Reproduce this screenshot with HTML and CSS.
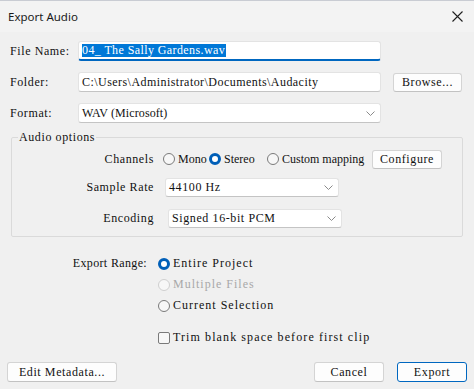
FILE: index.html
```html
<!DOCTYPE html>
<html lang="en">
<head>
    <meta charset="UTF-8">
    <title>Export Audio</title>
    <link rel="stylesheet" href="styles.css">
</head>
<body>
    <div class="dialog">
        <div class="titlebar">
            <span class="title">Export Audio</span>
            <span class="close">
                <svg width="11" height="11" viewBox="0 0 11 11"><path d="M0.5 0.5L10.5 10.5M10.5 0.5L0.5 10.5" stroke="#1f1f1f" stroke-width="1.1"/></svg>
            </span>
        </div>
        <div class="body">
            <div class="file-grid">
                <span class="label">File Name:</span>
                <div class="input focused"><span class="sel">04_ The Sally Gardens.wav</span></div>
                <span></span>

                <span class="label">Folder:</span>
                <div class="input path">C:\Users\Administrator\Documents\Audacity</div>
                <button class="btn browse">Browse...</button>

                <span class="label">Format:</span>
                <div class="input select fmt">WAV (Microsoft)
                    <svg class="chev" width="9" height="5" viewBox="0 0 9 5"><path d="M0.5 0.5L4.5 4.5L8.5 0.5" fill="none" stroke="#8a8a8a"/></svg>
                </div>
                <span></span>
            </div>

            <fieldset class="options">
                <legend>Audio options</legend>
                <div class="opt-row">
                    <span class="opt-label">Channels</span>
                    <div class="ropt mono"><span class="radio"></span>Mono</div>
                    <div class="ropt stereo"><span class="radio on"></span>Stereo</div>
                    <div class="ropt custom"><span class="radio"></span>Custom mapping</div>
                    <button class="btn configure">Configure</button>
                </div>

                <div class="opt-row rate">
                    <span class="opt-label">Sample Rate</span>
                    <div class="input select small">44100 Hz
                        <svg class="chev" width="9" height="5" viewBox="0 0 9 5"><path d="M0.5 0.5L4.5 4.5L8.5 0.5" fill="none" stroke="#8a8a8a"/></svg>
                    </div>
                </div>

                <div class="opt-row encoding">
                    <span class="opt-label">Encoding</span>
                    <div class="input select small enc">Signed 16-bit PCM
                        <svg class="chev" width="9" height="5" viewBox="0 0 9 5"><path d="M0.5 0.5L4.5 4.5L8.5 0.5" fill="none" stroke="#8a8a8a"/></svg>
                    </div>
                </div>
            </fieldset>

            <div class="range">
                <span class="range-label">Export Range:</span>
                <div class="choice"><span class="radio on"></span>Entire Project</div>
                <span></span>
                <div class="choice disabled"><span class="radio"></span>Multiple Files</div>
                <span></span>
                <div class="choice"><span class="radio"></span>Current Selection</div>
                <span></span>
                <div class="choice trim"><span class="check"></span>Trim blank space before first clip</div>
            </div>
        </div>
        <div class="footer">
            <button class="btn meta">Edit Metadata...</button>
            <div class="actions">
                <button class="btn">Cancel</button>
                <button class="btn primary">Export</button>
            </div>
        </div>
    </div>
</body>
</html>
```

FILE: styles.css
```css
/* dialog base */
body {
    margin: 0;
    background-color: #f0f0f0;
    font-family: "Liberation Serif", serif;
    font-size: 12px;
    letter-spacing: 0.6px;
    color: #111;
}

.dialog {
    width: 474px;
    height: 389px;
    background-color: #f0f0f0;
    border-top: 1px solid #c9ccd3;
    box-sizing: border-box;
    display: flex;
    flex-direction: column;
}

.titlebar {
    height: 31px;
    display: flex;
    justify-content: space-between;
    align-items: center;
    padding: 0 11px 0 8px;
    background-color: #f3f3f3;
}

.title {
    font-family: "Noto Sans", sans-serif;
    font-size: 11.5px;
    letter-spacing: 0;
    color: #1a1a1a;
}

.close {
    display: flex;
}

.body {
    flex: 1;
    padding: 9px 10px 0 10px;
}

/* file / folder / format rows */
.file-grid {
    display: grid;
    grid-template-columns: 68px 303px auto;
    grid-auto-rows: 20px;
    row-gap: 11px;
    align-items: center;
}

.label {
    line-height: 20px;
}

.input {
    height: 20px;
    box-sizing: border-box;
    background-color: #fff;
    border: 1px solid #e3e3e3;
    border-bottom-color: #c4c4c4;
    border-radius: 3px;
    padding: 0 3px;
    display: flex;
    align-items: center;
    white-space: nowrap;
}

.input.focused {
    border-bottom: 2px solid #0067c0;
}

.sel {
    background-color: #0078d7;
    color: #fff;
    line-height: 13px;
    padding-right: 1px;
    letter-spacing: 0.4px;
}

.path {
    letter-spacing: 0.45px;
}

.fmt {
    letter-spacing: 0.1px;
}

.select {
    justify-content: space-between;
}

.chev {
    margin-right: 2px;
}

.btn {
    font-family: inherit;
    font-size: inherit;
    letter-spacing: inherit;
    color: #111;
    background-color: #fdfdfd;
    border: 1px solid #d4d4d4;
    border-bottom-color: #c2c2c2;
    border-radius: 3px;
    height: 19px;
    padding: 0;
    cursor: pointer;
}

.browse {
    width: 69px;
    margin-left: 12px;
}

/* audio options group */
.options {
    margin: 8px 1px 0 1px;
    padding: 6px 0 8px 0;
    border: 1px solid #dadada;
    border-radius: 2px;
}

.options legend {
    padding: 0 1px;
    margin-left: 6px;
    line-height: 12px;
}

.opt-row {
    display: flex;
    align-items: center;
    height: 20px;
}

.opt-row.rate {
    margin-top: 8px;
}

.opt-row.encoding {
    margin-top: 11px;
}

.opt-label {
    width: 142px;
    padding-right: 9px;
    text-align: right;
    flex: none;
}

.ropt {
    display: flex;
    align-items: center;
    flex: none;
    white-space: nowrap;
    letter-spacing: 0;
}

.ropt .radio {
    margin-right: 3px;
}

.mono {
    width: 46px;
}

.stereo {
    width: 58px;
}

.custom {
    width: 105px;
}

.configure {
    width: 70px;
}

.small {
    width: 174px;
    height: 19px;
    margin-left: 2px;
}

.enc {
    margin-left: 5px;
}

.radio {
    width: 12px;
    height: 12px;
    box-sizing: border-box;
    border: 1px solid #7a7a7a;
    border-radius: 50%;
    background-color: #f7f7f7;
    flex: none;
}

.radio.on {
    border: 3.5px solid #005fb8;
    background-color: #fff;
}

.check {
    width: 12px;
    height: 12px;
    box-sizing: border-box;
    border: 1px solid #7a7a7a;
    border-radius: 2px;
    background-color: #f7f7f7;
    flex: none;
    margin-right: 3px;
}

/* export range */
.range {
    display: grid;
    grid-template-columns: 148px auto;
    grid-auto-rows: 21px;
    align-items: center;
    margin-top: 16px;
}

.range-label {
    text-align: right;
    padding-right: 11px;
    letter-spacing: 0.35px;
}

.choice {
    display: flex;
    align-items: center;
    letter-spacing: 1px;
}

.choice .radio {
    margin-right: 3px;
}

.choice.disabled {
    color: #a8a8a8;
}

.choice.disabled .radio {
    border-color: #cfcfcf;
}

.trim {
    margin-top: 22px;
    letter-spacing: 1.1px;
}

.footer {
    display: flex;
    justify-content: space-between;
    padding: 0 7px 7px 7px;
}

.meta {
    width: 110px;
    height: 20px;
}

.actions {
    display: flex;
    gap: 13px;
}

.actions .btn {
    width: 70px;
    height: 20px;
}

.btn.primary {
    border: 1.5px solid #0067c0;
}
```
